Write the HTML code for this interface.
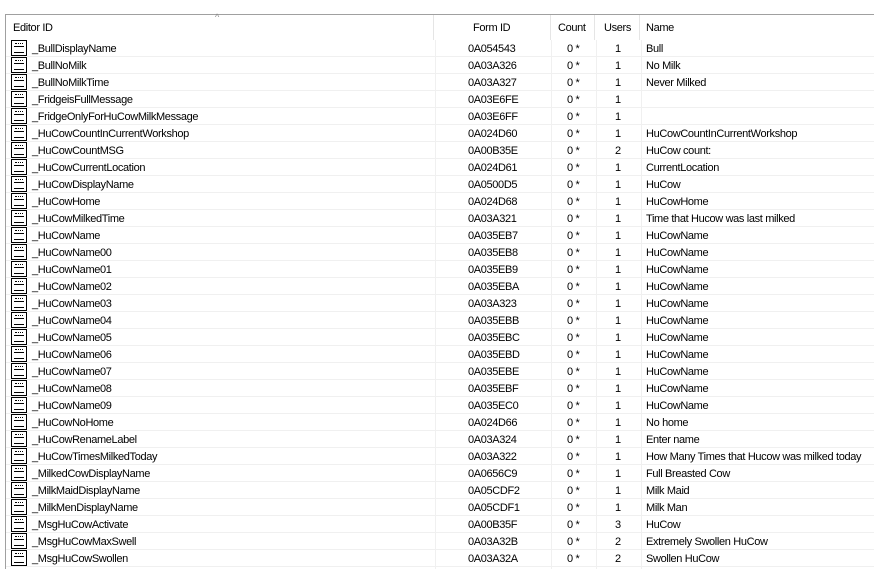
<!DOCTYPE html><html><head><style>
body{margin:0;width:874px;height:569px;overflow:hidden;background:#fff;font-family:"Liberation Sans",Arial,sans-serif;font-size:11px;letter-spacing:-0.35px;color:#000;position:relative}
.frame{position:absolute;left:5px;top:14px;right:0;bottom:0;border-left:1px solid #a0a0a0;border-top:1px solid #a0a0a0}
.hd{position:absolute;top:15px;height:25px;line-height:26px}
.hs{position:absolute;top:15px;width:1px;height:25px;background:#e5e5e5}
.row{position:absolute;left:6px;right:0;height:17px;border-bottom:1px solid #f0f0f0;box-sizing:border-box}
.row span{position:absolute;top:1px;line-height:16px;white-space:nowrap}
.vl{position:absolute;top:40px;bottom:0;width:1px;background:#f0f0f0}
.ic{position:absolute;left:5px;top:0px;width:14px;height:14px;border:1px solid #000;background:#fff}
.ic:before{content:"";position:absolute;left:2px;right:2px;top:5px;height:5px;border-top:1px solid #000;border-bottom:1px solid #000}
.ic:after{content:"";position:absolute;left:3px;right:3px;top:2px;border-top:1px dotted #000}
</style></head><body>
<div class="frame"></div>
<div class="hd" style="left:13px">Editor ID</div>
<div style="position:absolute;left:215px;top:12px;font-size:9px;color:#888">^</div>
<div class="hs" style="left:433px"></div><div class="hd" style="left:473px">Form ID</div>
<div class="hs" style="left:550px"></div><div class="hd" style="left:558px">Count</div>
<div class="hs" style="left:594px"></div><div class="hd" style="left:604px">Users</div>
<div class="hs" style="left:639px"></div><div class="hd" style="left:646px">Name</div>
<div class="vl" style="left:435px"></div><div class="vl" style="left:551px"></div><div class="vl" style="left:596px"></div><div class="vl" style="left:641px"></div>
<div id="rows"></div>
<script>
var d=[["_BullDisplayName","0A054543","1","Bull"],["_BullNoMilk","0A03A326","1","No Milk"],["_BullNoMilkTime","0A03A327","1","Never Milked"],["_FridgeisFullMessage","0A03E6FE","1",""],["_FridgeOnlyForHuCowMilkMessage","0A03E6FF","1",""],["_HuCowCountInCurrentWorkshop","0A024D60","1","HuCowCountInCurrentWorkshop"],["_HuCowCountMSG","0A00B35E","2","HuCow count:"],["_HuCowCurrentLocation","0A024D61","1","CurrentLocation"],["_HuCowDisplayName","0A0500D5","1","HuCow"],["_HuCowHome","0A024D68","1","HuCowHome"],["_HuCowMilkedTime","0A03A321","1","Time that Hucow was last milked"],["_HuCowName","0A035EB7","1","HuCowName"],["_HuCowName00","0A035EB8","1","HuCowName"],["_HuCowName01","0A035EB9","1","HuCowName"],["_HuCowName02","0A035EBA","1","HuCowName"],["_HuCowName03","0A03A323","1","HuCowName"],["_HuCowName04","0A035EBB","1","HuCowName"],["_HuCowName05","0A035EBC","1","HuCowName"],["_HuCowName06","0A035EBD","1","HuCowName"],["_HuCowName07","0A035EBE","1","HuCowName"],["_HuCowName08","0A035EBF","1","HuCowName"],["_HuCowName09","0A035EC0","1","HuCowName"],["_HuCowNoHome","0A024D66","1","No home"],["_HuCowRenameLabel","0A03A324","1","Enter name"],["_HuCowTimesMilkedToday","0A03A322","1","How Many Times that Hucow was milked today"],["_MilkedCowDisplayName","0A0656C9","1","Full Breasted Cow"],["_MilkMaidDisplayName","0A05CDF2","1","Milk Maid"],["_MilkMenDisplayName","0A05CDF1","1","Milk Man"],["_MsgHuCowActivate","0A00B35F","3","HuCow"],["_MsgHuCowMaxSwell","0A03A32B","2","Extremely Swollen HuCow"],["_MsgHuCowSwollen","0A03A32A","2","Swollen HuCow"]];
var h="";d.forEach(function(r,i){h+='<div class="row" style="top:'+(40+i*17)+'px"><div class="ic"></div><span style="left:26px">'+r[0]+'</span><span style="left:462px">'+r[1]+'</span><span style="left:561px">0 *</span><span style="left:609px">'+r[2]+'</span><span style="left:640px">'+r[3]+'</span></div>';});
document.getElementById("rows").innerHTML=h;
</script>
</body></html>
